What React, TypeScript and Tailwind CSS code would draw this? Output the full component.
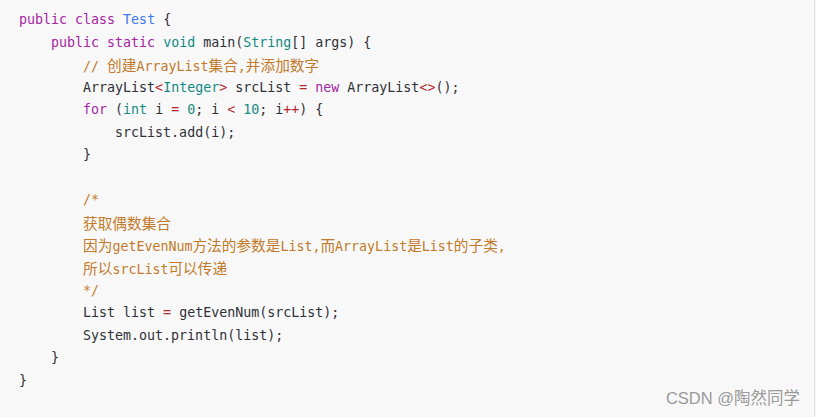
import React from 'react';

type Tok = [string, string?];

// token colours, roughly CSDN's light code theme
const KW = 'text-[#a626a4]';
const TY = 'text-[#128a83]';
const NUM = 'text-[#128a83]';
const OP = 'text-[#b3262b]';
const TI = 'text-[#4078f2]';
const CM = 'text-[#c27a2a]';

const lines: { indent: number; toks: Tok[] }[] = [
  { indent: 0, toks: [['public', KW], [' '], ['class', KW], [' '], ['Test', TI], [' {']] },
  {
    indent: 4,
    toks: [['public', KW], [' '], ['static', KW], [' '], ['void', TY], [' main('], ['String', TY], ['[] args) {']],
  },
  { indent: 8, toks: [['// 创建ArrayList集合,并添加数字', CM]] },
  {
    indent: 8,
    toks: [['ArrayList'], ['<', OP], ['Integer', TY], ['>', OP], [' srcList '], ['=', OP], [' '], ['new', KW], [' ArrayList'], ['<>', OP], ['();']],
  },
  {
    indent: 8,
    toks: [['for', KW], [' ('], ['int', TY], [' i '], ['=', OP], [' '], ['0', NUM], ['; i '], ['<', OP], [' '], ['10', NUM], ['; i'], ['++', OP], [') {']],
  },
  { indent: 12, toks: [['srcList.add(i);']] },
  { indent: 8, toks: [['}']] },
  { indent: 0, toks: [] },
  { indent: 8, toks: [['/*', CM]] },
  { indent: 8, toks: [['获取偶数集合', CM]] },
  { indent: 8, toks: [['因为getEvenNum方法的参数是List,而ArrayList是List的子类,', CM]] },
  { indent: 8, toks: [['所以srcList可以传递', CM]] },
  { indent: 8, toks: [['*/', CM]] },
  { indent: 8, toks: [['List list '], ['=', OP], [' getEvenNum(srcList);']] },
  { indent: 8, toks: [['System.out.println(list);']] },
  { indent: 4, toks: [['}']] },
  { indent: 0, toks: [['}']] },
];

// CJK runs get Consolas-like proportions: wider glyphs than the mono font
function splitCjk(text: string) {
  const parts = text.split(/([\u3400-\u9fff\uff00-\uffef]+)/);
  return parts.map((p, i) =>
    /[\u3400-\u9fff]/.test(p) ? (
      <span key={i} className="text-[14.67px] font-['Noto_Sans_CJK_SC',sans-serif]">
        {p}
      </span>
    ) : (
      p
    )
  );
}

export default function App() {
  return (
    <div className="relative flex w-[816px] h-[417px] bg-[#f8f8f8] overflow-hidden">
      <div className="flex-1 pt-[9px] pl-[19px] font-['DejaVu_Sans_Mono','Liberation_Mono',monospace] text-[13.3px] text-[#2f3136]">
        {lines.map((line, i) => (
          <div key={i} className="h-[22.55px] leading-[22.55px] whitespace-pre">
            {' '.repeat(line.indent)}
            {line.toks.map(([text, cls], j) => (
              <span key={j} className={cls}>
                {splitCjk(text)}
              </span>
            ))}
          </div>
        ))}
      </div>
      <div className="w-px bg-[#dedede]" />
      <div className="w-px" />
      <div className="absolute right-[16px] top-[386px] text-[16.5px] text-[#9a9a9a] font-['Liberation_Sans','Noto_Sans_CJK_SC',sans-serif]">
        CSDN @陶然同学
      </div>
    </div>
  );
}
